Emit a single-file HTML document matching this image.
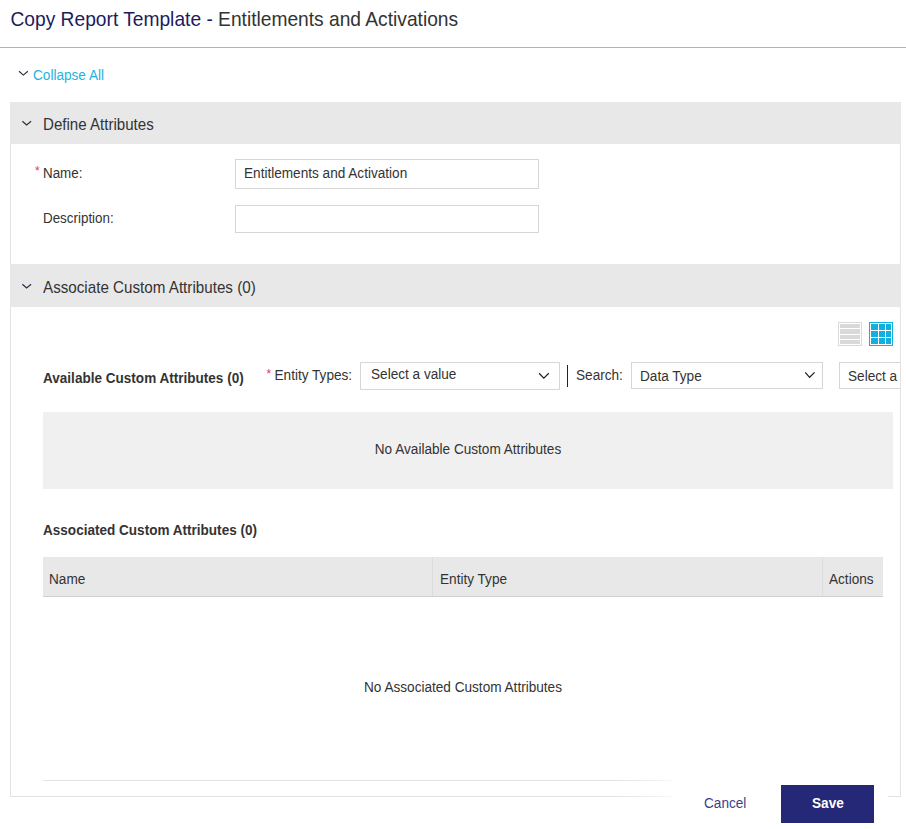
<!DOCTYPE html>
<html><head><meta charset="utf-8">
<style>
*{margin:0;padding:0;box-sizing:border-box}
html,body{width:906px;height:829px;overflow:hidden;background:#fff}
body{position:relative;font-family:"Liberation Sans",sans-serif;color:#333;}
.a{position:absolute;white-space:nowrap;line-height:1;transform:scaleY(1.08);transform-origin:0 2px}
.box{position:absolute}
</style></head><body>
<!-- title -->
<div class="a" id="t_title" style="left:10.5px;top:9.3px;font-size:19.2px;color:#333"><span style="color:#1c1c5e">Copy Report Template -</span> Entitlements and Activations</div>
<div class="box" style="left:0;top:47px;width:906px;height:1px;background:#aeb4bf"></div>

<!-- collapse all -->
<svg class="box" style="left:18px;top:69px" width="11" height="9" viewBox="0 0 11 9"><path d="M1 2.2 L5.3 6.1 L9.8 2.2" fill="none" stroke="#2a2a3a" stroke-width="1.15"/></svg>
<div class="a" id="t_collapse" style="left:33px;top:68px;font-size:13.6px;color:#1db3e0">Collapse All</div>

<!-- panel -->
<div class="box" style="left:10px;top:102px;width:891px;height:695px;border:1px solid #e3e3e3"></div>

<!-- header 1 -->
<div class="box" style="left:10px;top:102px;width:891px;height:42px;background:#e8e8e8"></div>
<svg class="box" style="left:21px;top:119px" width="12" height="9" viewBox="0 0 12 9"><path d="M1.4 2.3 L5.6 6 L10.1 2.3" fill="none" stroke="#2a2a3a" stroke-width="1.15"/></svg>
<div class="a" id="t_h1" style="left:43px;top:117px;font-size:15.1px;transform:scaleY(1.065);transform-origin:0 12.8px;color:#333">Define Attributes</div>

<div class="a" style="left:35px;top:164px;font-size:12px;color:#e8336b">*</div>
<div class="a" id="t_name" style="left:43px;top:166px;font-size:13.4px;color:#333">Name:</div>
<div class="box" style="left:235px;top:159px;width:304px;height:30px;border:1px solid #d6d6d6"></div>
<div class="a" id="t_inp" style="left:244px;top:166px;font-size:13.6px;color:#333">Entitlements and Activation</div>

<div class="a" id="t_desc" style="left:43px;top:211px;font-size:13.4px;color:#333">Description:</div>
<div class="box" style="left:235px;top:205px;width:304px;height:28px;border:1px solid #d6d6d6"></div>

<!-- header 2 -->
<div class="box" style="left:10px;top:264px;width:891px;height:43px;background:#e8e8e8"></div>
<svg class="box" style="left:21px;top:282px" width="12" height="9" viewBox="0 0 12 9"><path d="M1.4 2.3 L5.6 6 L10.1 2.3" fill="none" stroke="#2a2a3a" stroke-width="1.15"/></svg>
<div class="a" id="t_h2" style="left:43px;top:280px;font-size:15.2px;transform:scaleY(1.065);transform-origin:0 12.8px;color:#333">Associate Custom Attributes (0)</div>

<!-- icons -->
<svg class="box" style="left:838px;top:322px" width="24" height="24" viewBox="0 0 24 24">
<rect x="0.5" y="0.5" width="23" height="23" fill="#fff" stroke="#d9d9d9"/>
<rect x="2" y="2" width="20" height="4" fill="#d9d9d9"/>
<rect x="2" y="7" width="20" height="5" fill="#d9d9d9"/>
<rect x="2" y="13" width="20" height="4" fill="#d9d9d9"/>
<rect x="2" y="18" width="20" height="4" fill="#d9d9d9"/>
</svg>
<svg class="box" style="left:869px;top:322px" width="24" height="24" viewBox="0 0 24 24">
<rect x="0.5" y="0.5" width="23" height="23" fill="#fff" stroke="#12b0de"/>
<rect x="2" y="2" width="7" height="6" fill="#12b0de"/>
<rect x="10" y="2" width="6" height="6" fill="#12b0de"/>
<rect x="17" y="2" width="5" height="6" fill="#12b0de"/>
<rect x="2" y="9" width="7" height="6" fill="#12b0de"/>
<rect x="10" y="9" width="6" height="6" fill="#12b0de"/>
<rect x="17" y="9" width="5" height="6" fill="#12b0de"/>
<rect x="2" y="16" width="7" height="6" fill="#12b0de"/>
<rect x="10" y="16" width="6" height="6" fill="#12b0de"/>
<rect x="17" y="16" width="5" height="6" fill="#12b0de"/>
</svg>

<!-- filter row -->
<div class="a" id="t_avail" style="left:43px;top:371px;font-size:13.55px;font-weight:bold;color:#333">Available Custom Attributes (0)</div>
<div class="a" style="left:266.5px;top:367px;font-size:12px;color:#e8336b">*</div>
<div class="a" id="t_ent" style="left:274.5px;top:368px;font-size:13.6px;color:#333">Entity Types:</div>
<div class="box" style="left:360px;top:362px;width:200px;height:28px;border:1px solid #d6d6d6"></div>
<div class="a" id="t_sel1" style="left:371px;top:367px;font-size:13.6px;color:#333">Select a value</div>
<svg class="box" style="left:537px;top:371px" width="14" height="10" viewBox="0 0 14 10"><path d="M2.1 2.2 L6.8 7.1 L11.8 2.2" fill="none" stroke="#222" stroke-width="1.25"/></svg>
<div class="box" style="left:567px;top:365px;width:1px;height:22px;background:#222"></div>
<div class="a" id="t_search" style="left:576px;top:368px;font-size:13.6px;color:#333">Search:</div>
<div class="box" style="left:631px;top:362px;width:192px;height:27px;border:1px solid #d6d6d6"></div>
<div class="a" id="t_dt" style="left:640px;top:369px;font-size:13.6px;color:#333">Data Type</div>
<svg class="box" style="left:804px;top:370px" width="14" height="10" viewBox="0 0 14 10"><path d="M1.2 2.4 L5.6 7.3 L10.6 2.4" fill="none" stroke="#222" stroke-width="1.25"/></svg>
<div class="box" style="left:839px;top:362px;width:61px;height:27px;overflow:hidden">
  <div class="box" style="left:0;top:0;width:200px;height:27px;border:1px solid #d6d6d6"></div>
  <div class="a" id="t_sel3" style="left:9px;top:7px;font-size:13.6px;color:#333">Select a value</div>
</div>

<!-- available gray box -->
<div class="box" style="left:43px;top:412px;width:850px;height:77px;background:#f0f0f0"></div>
<div class="a" id="t_noavail" style="left:43px;width:850px;text-align:center;top:442px;font-size:13.6px;color:#333">No Available Custom Attributes</div>

<div class="a" id="t_assoc" style="left:43px;top:523px;font-size:13.55px;font-weight:bold;color:#333">Associated Custom Attributes (0)</div>

<!-- table -->
<div class="box" style="left:43px;top:557px;width:840px;height:40px;background:#e8e8e8;border-bottom:1px solid #cfcfcf"></div>
<div class="box" style="left:432px;top:557px;width:1px;height:39px;background:#dcdcdc"></div>
<div class="box" style="left:822px;top:557px;width:1px;height:39px;background:#dcdcdc"></div>
<div class="a" id="t_thname" style="left:49px;top:572px;font-size:13.6px;color:#333">Name</div>
<div class="a" id="t_thent" style="left:440px;top:572px;font-size:13.6px;color:#333">Entity Type</div>
<div class="a" id="t_thact" style="left:829px;top:572px;font-size:13.6px;color:#333">Actions</div>
<div class="a" id="t_noassoc" style="left:43px;width:840px;text-align:center;top:680px;font-size:13.6px;color:#333">No Associated Custom Attributes</div>
<div class="box" style="left:43px;top:780px;width:840px;height:1px;background:#e3e3e3"></div>

<!-- footer overlay -->
<div class="box" style="left:615px;top:770px;width:57px;height:59px;background:linear-gradient(to right,rgba(255,255,255,0),rgba(255,255,255,.65))"></div>
<div class="box" style="left:672px;top:770px;width:216px;height:59px;background:#fff"></div>
<div class="a" id="t_cancel" style="left:704px;top:796px;font-size:13.6px;color:#3b3f8f">Cancel</div>
<div class="box" style="left:781px;top:785px;width:93px;height:38px;background:#242877"></div>
<div class="a" id="t_save" style="left:812px;top:796px;font-size:13.6px;font-weight:bold;color:#fff">Save</div>
</body></html>
